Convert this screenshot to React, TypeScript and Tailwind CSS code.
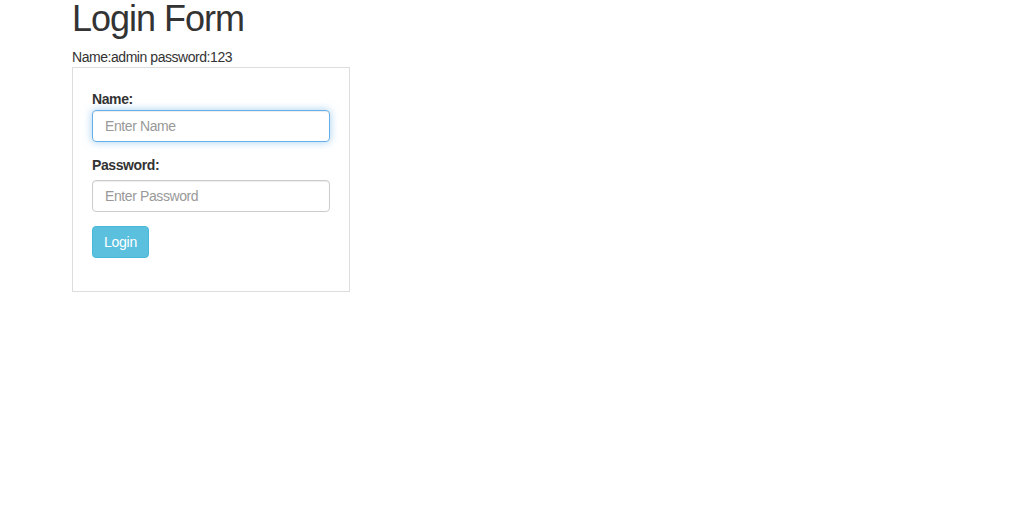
import { useState } from 'react';

// Simple bootstrap-ish login form
export default function App() {
  const [name, setName] = useState('');
  const [password, setPassword] = useState('');

  return (
    <div className="min-h-[510px] bg-white pl-[72px] text-[#333] font-['Liberation_Sans',Arial,sans-serif]">
      <h1 className="m-0 text-[36px] leading-[38px] font-normal tracking-[-1px]">Login Form</h1>
      <p className="mt-[9px] text-[14px] leading-[20px] tracking-[-0.45px]">Name:admin password:123</p>

      <form
        className="w-[278px] border border-[#ddd] px-[19px] pt-[21px] pb-[33px]"
        onSubmit={(e) => e.preventDefault()}
      >
        <div className="mb-[13px]">
          <label htmlFor="name" className="block text-[14px] leading-[20px] font-bold mb-[1px] tracking-[-0.4px]">
            Name:
          </label>
          <input
            id="name"
            type="text"
            autoFocus
            value={name}
            onChange={(e) => setName(e.target.value)}
            placeholder="Enter Name"
            className="block w-full h-[32px] px-[12px] text-[14px] tracking-[-0.4px] rounded-[4px] border border-[#66afe9] outline-none shadow-[inset_0_1px_1px_rgba(0,0,0,0.075),0_0_8px_rgba(102,175,233,0.6)] placeholder:text-[#999]"
          />
        </div>
        <div className="mb-[14px]">
          <label htmlFor="password" className="block text-[14px] leading-[20px] font-bold mb-[5px] tracking-[-0.4px]">
            Password:
          </label>
          <input
            id="password"
            type="password"
            value={password}
            onChange={(e) => setPassword(e.target.value)}
            placeholder="Enter Password"
            className="block w-full h-[32px] px-[12px] text-[14px] tracking-[-0.4px] rounded-[4px] border border-[#ccc] outline-none shadow-[inset_0_1px_1px_rgba(0,0,0,0.075)] placeholder:text-[#999]"
          />
        </div>
        <button
          type="submit"
          className="h-[32px] w-[57px] rounded-[4px] border border-[#46b8da] bg-[#5bc0de] text-[14px] tracking-[-0.3px] text-white"
        >
          Login
        </button>
      </form>
    </div>
  );
}
